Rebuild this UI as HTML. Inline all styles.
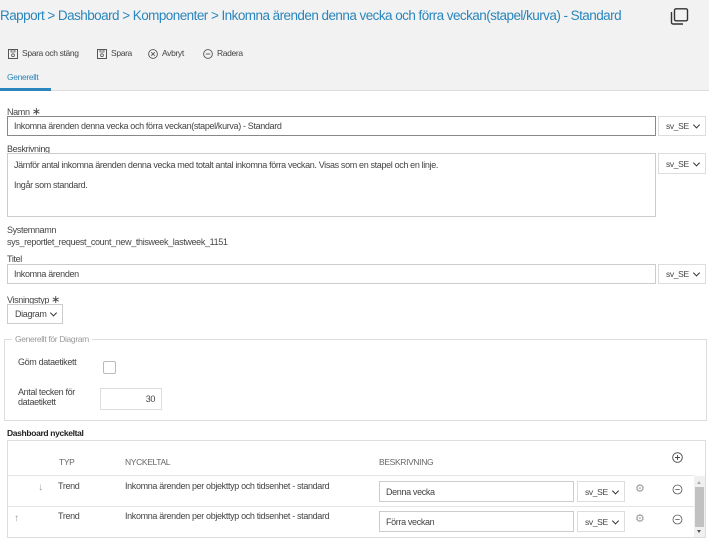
<!DOCTYPE html>
<html><head><meta charset="utf-8"><style>
*{box-sizing:border-box;margin:0;padding:0}
body{width:709px;height:543px;overflow:hidden;background:#fff;font-family:"Liberation Sans",sans-serif;color:#444;position:relative;font-size:9px;letter-spacing:-0.35px}
.a{position:absolute;white-space:nowrap}
.hdr{position:absolute;left:0;top:0;width:709px;height:91px;background:#f2f2f2;border-bottom:1px solid #ddd}
.title{left:0;top:8px;font-size:13.5px;color:#2a86bd;letter-spacing:-0.55px}
.box{position:absolute;border:1px solid #ccc;background:#fff;padding:0 6px;display:flex;align-items:center}
.sel{position:absolute;border:1px solid #ddd;background:#fff;display:flex;align-items:center;padding-left:7px;font-size:8.5px}
.sel:after{content:"";position:absolute;right:6px;top:50%;width:4px;height:4px;border-right:1.5px solid #333;border-bottom:1.5px solid #333;transform:translateY(-70%) rotate(45deg)}
.lbl{font-size:9px;color:#444}
.ic{display:inline-block;vertical-align:middle;margin-right:4px}
.th{font-size:8.5px;color:#666}
</style></head><body>
<div class="hdr"></div>
<div class="a title">Rapport &gt; Dashboard &gt; Komponenter &gt; Inkomna ärenden denna vecka och förra veckan(stapel/kurva) - Standard</div>
<svg class="a" style="left:670px;top:8px" width="19" height="17" viewBox="0 0 19 17"><rect x="4.5" y="0.8" width="13" height="12" rx="1.5" fill="none" stroke="#333" stroke-width="1.4"/><path d="M1.5 4v10.5a1.5 1.5 0 0 0 1.5 1.5h10" fill="none" stroke="#333" stroke-width="1.4"/></svg>

<div class="a" style="left:8px;top:48px;font-size:8.5px;color:#444">
<svg class="ic" width="10" height="10"><rect x=".5" y=".5" width="9" height="9" fill="none" stroke="#555"/><rect x="3" y="1" width="4" height="2" fill="none" stroke="#555" stroke-width=".7"/><circle cx="5" cy="6.2" r="1.4" fill="none" stroke="#555" stroke-width=".8"/></svg>Spara och stäng</div>
<div class="a" style="left:97px;top:48px;font-size:8.5px">
<svg class="ic" width="10" height="10"><rect x=".5" y=".5" width="9" height="9" fill="none" stroke="#555"/><rect x="3" y="1" width="4" height="2" fill="none" stroke="#555" stroke-width=".7"/><circle cx="5" cy="6.2" r="1.4" fill="none" stroke="#555" stroke-width=".8"/></svg>Spara</div>
<div class="a" style="left:148px;top:48px;font-size:8.5px">
<svg class="ic" width="10" height="10"><circle cx="5" cy="5" r="4.4" fill="none" stroke="#555" stroke-width=".9"/><path d="M3.3 3.3l3.4 3.4M6.7 3.3l-3.4 3.4" stroke="#555" stroke-width=".9"/></svg>Avbryt</div>
<div class="a" style="left:203px;top:48px;font-size:8.5px">
<svg class="ic" width="10" height="10"><circle cx="5" cy="5" r="4.4" fill="none" stroke="#555" stroke-width=".9"/><path d="M2.8 5h4.4" stroke="#555" stroke-width=".9"/></svg>Radera</div>
<div class="a" style="left:7px;top:72px;font-size:8.5px;color:#2a86bd">Generellt</div>
<div class="a" style="left:0;top:88px;width:51px;height:3px;background:#2a86bd"></div>

<div class="a lbl" style="left:7px;top:105px">Namn <span style="font-size:11px">∗</span></div>
<div class="box" style="left:7px;top:116px;width:649px;height:20px;border-color:#888">Inkomna ärenden denna vecka och förra veckan(stapel/kurva) - Standard</div>
<div class="sel" style="left:658px;top:116px;width:48px;height:20px">sv_SE</div>

<div class="a lbl" style="left:7px;top:144px">Beskrivning</div>
<div class="box" style="left:7px;top:153px;width:649px;height:64px;align-items:flex-start;padding-top:6px;line-height:10px;white-space:pre">Jämför antal inkomna ärenden denna vecka med totalt antal inkomna förra veckan. Visas som en stapel och en linje.

Ingår som standard.</div>
<div class="sel" style="left:658px;top:153px;width:48px;height:21px">sv_SE</div>

<div class="a lbl" style="left:7px;top:225px">Systemnamn</div>
<div class="a lbl" style="left:7px;top:237px">sys_reportlet_request_count_new_thisweek_lastweek_1151</div>
<div class="a lbl" style="left:7px;top:254px">Titel</div>
<div class="box" style="left:7px;top:264px;width:649px;height:20px">Inkomna ärenden</div>
<div class="sel" style="left:658px;top:264px;width:48px;height:20px">sv_SE</div>

<div class="a lbl" style="left:7px;top:293px">Visningstyp <span style="font-size:11px">∗</span></div>
<div class="sel" style="left:7px;top:304px;width:56px;height:20px;border-color:#ccc;font-size:9px">Diagram</div>

<div class="a" style="left:4px;top:339px;width:703px;height:82px;border:1px solid #ddd"></div>
<div class="a" style="left:12px;top:334px;background:#fff;padding:0 3px;color:#999;font-size:8.5px">Generellt för Diagram</div>
<div class="a lbl" style="left:18px;top:357px">Göm dataetikett</div>
<div class="a" style="left:103px;top:361px;width:13px;height:13px;border:1px solid #bbb;border-radius:2px"></div>
<div class="a lbl" style="left:18px;top:387px;line-height:10px">Antal tecken för<br>dataetikett</div>
<div class="box" style="left:100px;top:388px;width:62px;height:22px;justify-content:flex-end;border-color:#ddd">30</div>

<div class="a" style="left:7px;top:428px;font-weight:bold;font-size:8.5px;color:#222">Dashboard nyckeltal</div>
<div class="a" style="left:7px;top:440px;width:699px;height:98px;border:1px solid #ddd"></div>
<div class="a th" style="left:59px;top:457px">TYP</div>
<div class="a th" style="left:125px;top:457px">NYCKELTAL</div>
<div class="a th" style="left:379px;top:457px">BESKRIVNING</div>
<svg class="a" style="left:672px;top:452px" width="11" height="11"><circle cx="5.5" cy="5.5" r="4.8" fill="none" stroke="#444" stroke-width=".9"/><path d="M5.5 3v5M3 5.5h5" stroke="#444" stroke-width=".9"/></svg>
<div class="a" style="left:8px;top:475px;width:686px;border-top:1px solid #e5e5e5"></div>
<div class="a" style="left:8px;top:506px;width:686px;border-top:1px solid #e5e5e5"></div>

<div class="a" style="left:38px;top:482px;color:#999;font-size:10px">↓</div>
<div class="a lbl" style="left:58px;top:481px">Trend</div>
<div class="a lbl" style="left:125px;top:481px">Inkomna ärenden per objekttyp och tidsenhet - standard</div>
<div class="box" style="left:379px;top:481px;width:195px;height:21px">Denna vecka</div>
<div class="sel" style="left:577px;top:481px;width:48px;height:21px">sv_SE</div>
<div class="a" style="left:635px;top:482px;color:#999;font-size:11px">⚙</div>
<svg class="a" style="left:672px;top:484px" width="11" height="11"><circle cx="5.5" cy="5.5" r="4.5" fill="none" stroke="#555" stroke-width=".8"/><path d="M3.3 5.5h4.4" stroke="#555" stroke-width=".8"/></svg>

<div class="a" style="left:14px;top:513px;color:#999;font-size:10px">↑</div>
<div class="a lbl" style="left:58px;top:511px">Trend</div>
<div class="a lbl" style="left:125px;top:511px">Inkomna ärenden per objekttyp och tidsenhet - standard</div>
<div class="box" style="left:379px;top:511px;width:195px;height:21px">Förra veckan</div>
<div class="sel" style="left:577px;top:511px;width:48px;height:21px">sv_SE</div>
<div class="a" style="left:635px;top:512px;color:#999;font-size:11px">⚙</div>
<svg class="a" style="left:672px;top:514px" width="11" height="11"><circle cx="5.5" cy="5.5" r="4.5" fill="none" stroke="#555" stroke-width=".8"/><path d="M3.3 5.5h4.4" stroke="#555" stroke-width=".8"/></svg>

<div class="a" style="left:694px;top:476px;width:11px;height:61px;background:#f0f0f0"></div>
<div class="a" style="left:695px;top:487px;width:9px;height:40px;background:#c1c1c1"></div>
<div class="a" style="left:697px;top:479px;width:0;height:0;border:2.5px solid transparent;border-bottom:3px solid #aaa"></div>
<div class="a" style="left:697px;top:530px;width:0;height:0;border:2.5px solid transparent;border-top:3px solid #555"></div>
</body></html>
